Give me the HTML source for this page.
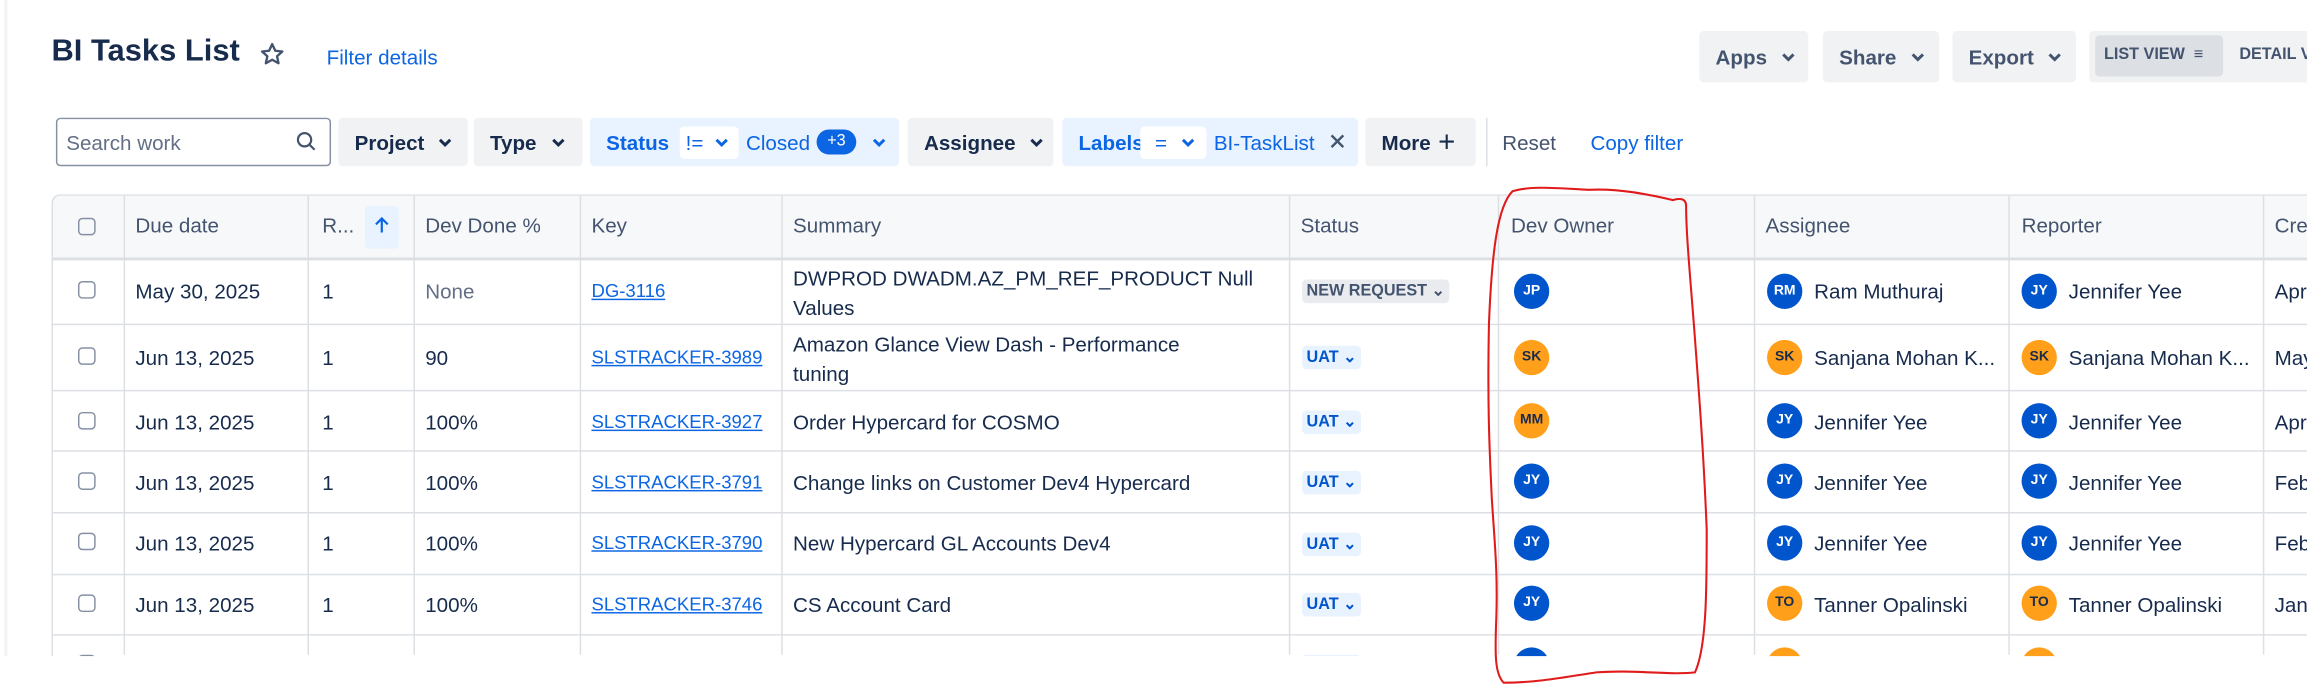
<!DOCTYPE html>
<html><head><meta charset="utf-8"><style>
html,body{margin:0;padding:0;background:#fff;}
body{width:2307px;height:688px;overflow:hidden;position:relative;}
#w{position:absolute;left:0;top:0;width:1568px;height:468px;transform:scale(1.4713);transform-origin:0 0;font-family:"Liberation Sans",sans-serif;color:#172b4d;font-size:14px;}
.a{position:absolute;}
.btn{position:absolute;background:#f1f2f4;border-radius:3px;font-weight:bold;color:#44546f;display:flex;align-items:center;box-sizing:border-box;padding-left:11px;}
.chev{display:inline-block;width:9px;height:6px;margin-left:10px;}
.lnk{color:#0c66e4;}
.hcell{position:absolute;top:132px;height:43px;line-height:43px;color:#44546f;font-size:14px;}
.vl{position:absolute;top:133px;height:312px;width:1px;background:#dcdfe4;}
.hl{position:absolute;left:35px;width:1533px;height:1px;background:#dcdfe4;}
.cb{position:absolute;left:53px;width:12px;height:12px;border:1.5px solid #8590a2;border-radius:3px;box-sizing:border-box;}
.t{position:absolute;white-space:nowrap;}
.key{color:#0c66e4;text-decoration:underline;font-size:12.6px;margin-top:1px;}
.av{position:absolute;width:24px;height:24px;border-radius:50%;color:#fff;font-size:9.5px;font-weight:bold;text-align:center;line-height:24px;}
.b{background:#0055cc;}
.o{background:#ff9f1a;color:#172b4d;}
.loz{position:absolute;left:885px;height:16px;line-height:16px;border-radius:3px;font-size:11px;font-weight:bold;padding:0 3px;}
.uat{background:#e9f2ff;color:#0055cc;}
.nr{background:#e9ebee;color:#44546f;}
</style></head><body><div id="w">
<div class="a" style="left:3px;top:0;width:2px;height:446px;background:#f1f2f4"></div>
<div class="t" style="left:35px;top:23px;font-size:21px;font-weight:bold;color:#172b4d">BI Tasks List</div>
<svg class="a" style="left:176px;top:28px" width="18" height="18" viewBox="0 0 18 18"><path d="M9 2l2.1 4.5 4.8.5-3.6 3.2 1 4.8L9 12.6 4.7 15l1-4.8L2.1 7l4.8-.5z" fill="none" stroke="#44546f" stroke-width="1.6" stroke-linejoin="round"/></svg>
<div class="t lnk" style="left:222px;top:31px;font-size:14px">Filter details</div>

<div class="btn" style="left:1155px;top:21px;width:74px;height:35px">Apps<svg class="chev" viewBox="0 0 9 6"><path d="M1 1l3.5 3.5L8 1" fill="none" stroke="#44546f" stroke-width="2"/></svg></div>
<div class="btn" style="left:1239px;top:21px;width:79px;height:35px">Share<svg class="chev" viewBox="0 0 9 6"><path d="M1 1l3.5 3.5L8 1" fill="none" stroke="#44546f" stroke-width="2"/></svg></div>
<div class="btn" style="left:1327px;top:21px;width:84px;height:35px">Export<svg class="chev" viewBox="0 0 9 6"><path d="M1 1l3.5 3.5L8 1" fill="none" stroke="#44546f" stroke-width="2"/></svg></div>
<div class="a" style="left:1420px;top:21px;width:160px;height:35px;background:#f1f2f4;border-radius:3px"></div>
<div class="a" style="left:1424px;top:24px;width:87px;height:28px;background:#dcdfe4;border-radius:3px"></div>
<div class="t" style="left:1430px;top:31px;font-size:11px;font-weight:bold;color:#44546f">LIST VIEW &nbsp;≡</div>
<div class="t" style="left:1522px;top:31px;font-size:11px;font-weight:bold;color:#44546f">DETAIL VIEW</div>

<div class="a" style="left:38px;top:80px;width:187px;height:33px;border:1px solid #8590a2;border-radius:3px;box-sizing:border-box"></div>
<div class="t" style="left:45px;top:89px;color:#626f86">Search work</div>
<svg class="a" style="left:201px;top:89px" width="14" height="14" viewBox="0 0 14 14"><circle cx="6" cy="6" r="4.5" fill="none" stroke="#44546f" stroke-width="1.5"/><path d="M9.3 9.3l3.5 3.5" stroke="#44546f" stroke-width="1.5"/></svg>
<div class="btn" style="left:230px;top:80px;width:88px;height:33px;color:#172b4d">Project<svg class="chev" viewBox="0 0 9 6"><path d="M1 1l3.5 3.5L8 1" fill="none" stroke="#172b4d" stroke-width="2"/></svg></div>
<div class="btn" style="left:322px;top:80px;width:74px;height:33px;color:#172b4d">Type<svg class="chev" viewBox="0 0 9 6"><path d="M1 1l3.5 3.5L8 1" fill="none" stroke="#172b4d" stroke-width="2"/></svg></div>
<div class="a" style="left:401px;top:80px;width:210px;height:33px;background:#e9f2ff;border-radius:3px"></div>
<div class="t" style="left:412px;top:89px;font-weight:bold;color:#0c66e4">Status</div>
<div class="a" style="left:462px;top:86px;width:40px;height:22px;background:#fff;border-radius:3px"></div>
<div class="t" style="left:466px;top:89px;color:#0c66e4">!=</div>
<svg class="a" style="left:486px;top:94px" width="9" height="6" viewBox="0 0 9 6"><path d="M1 1l3.5 3.5L8 1" fill="none" stroke="#0c66e4" stroke-width="2"/></svg>
<div class="t" style="left:507px;top:89px;color:#0c66e4">Closed</div>
<div class="a" style="left:555px;top:88px;width:27px;height:17px;border-radius:9px;background:#0c66e4;color:#fff;font-size:11px;text-align:center;line-height:17px">+3</div>
<svg class="a" style="left:593px;top:94px" width="9" height="6" viewBox="0 0 9 6"><path d="M1 1l3.5 3.5L8 1" fill="none" stroke="#0c66e4" stroke-width="2"/></svg>
<div class="btn" style="left:617px;top:80px;width:99px;height:33px;color:#172b4d">Assignee<svg class="chev" viewBox="0 0 9 6"><path d="M1 1l3.5 3.5L8 1" fill="none" stroke="#172b4d" stroke-width="2"/></svg></div>
<div class="a" style="left:722px;top:80px;width:201px;height:33px;background:#e9f2ff;border-radius:3px"></div>
<div class="t" style="left:733px;top:89px;font-weight:bold;color:#0c66e4">Labels</div>
<div class="a" style="left:775px;top:86px;width:45px;height:22px;background:#fff;border-radius:3px"></div>
<div class="t" style="left:785px;top:89px;color:#0c66e4">=</div>
<svg class="a" style="left:803px;top:94px" width="9" height="6" viewBox="0 0 9 6"><path d="M1 1l3.5 3.5L8 1" fill="none" stroke="#0c66e4" stroke-width="2"/></svg>
<div class="t" style="left:825px;top:89px;color:#0c66e4">BI-TaskList</div>
<svg class="a" style="left:904px;top:91px" width="10" height="10" viewBox="0 0 10 10"><path d="M1 1l8 8M9 1l-8 8" stroke="#44546f" stroke-width="1.6"/></svg>
<div class="btn" style="left:928px;top:80px;width:75px;height:33px;color:#172b4d">More <span style="font-size:20px;font-weight:normal;margin-left:5px;line-height:20px">+</span></div>
<div class="a" style="left:1010px;top:80px;width:1px;height:33px;background:#dcdfe4"></div>
<div class="t" style="left:1021px;top:89px;color:#44546f">Reset</div>
<div class="t lnk" style="left:1081px;top:89px">Copy filter</div>

<!-- table -->
<div class="a" style="left:35px;top:132px;width:1540px;height:43px;background:#f7f8f9;border-top:1px solid #dcdfe4;border-left:1px solid #dcdfe4;border-top-left-radius:6px;box-sizing:border-box"></div>
<div class="a" style="left:35px;top:140px;width:1px;height:306px;background:#dcdfe4"></div>
<div class="vl" style="left:84px"></div><div class="vl" style="left:209px"></div><div class="vl" style="left:281px"></div><div class="vl" style="left:394px"></div><div class="vl" style="left:531px"></div><div class="vl" style="left:876px"></div><div class="vl" style="left:1018px"></div><div class="vl" style="left:1192px"></div><div class="vl" style="left:1365px"></div><div class="vl" style="left:1538px"></div>
<div class="hl" style="top:175px;height:2px"></div><div class="hl" style="top:220px"></div><div class="hl" style="top:265px"></div><div class="hl" style="top:306px"></div><div class="hl" style="top:348px"></div><div class="hl" style="top:390px"></div><div class="hl" style="top:431px"></div>
<div class="cb" style="top:148px"></div>
<div class="hcell" style="left:92px">Due date</div>
<div class="hcell" style="left:219px">R...</div>
<div class="a" style="left:248px;top:140px;width:23px;height:29px;background:#e9f2ff;border-radius:3px"></div>
<svg class="a" style="left:254px;top:147px" width="11" height="12" viewBox="0 0 11 12"><path d="M5.5 11V1.5M1.5 5.5l4-4 4 4" fill="none" stroke="#0c66e4" stroke-width="1.5"/></svg>
<div class="hcell" style="left:289px">Dev Done %</div>
<div class="hcell" style="left:402px">Key</div>
<div class="hcell" style="left:539px">Summary</div>
<div class="hcell" style="left:884px">Status</div>
<div class="hcell" style="left:1027px">Dev Owner</div>
<div class="hcell" style="left:1200px">Assignee</div>
<div class="hcell" style="left:1374px">Reporter</div>
<div class="hcell" style="left:1546px">Created</div>

<!-- row1 -->
<div class="cb" style="top:191px"></div>
<div class="t" style="left:92px;top:190px">May 30, 2025</div>
<div class="t" style="left:219px;top:190px">1</div>
<div class="t" style="left:289px;top:190px;color:#626f86">None</div>
<div class="t key" style="left:402px;top:190px">DG-3116</div>
<div class="t" style="left:539px;top:179px;line-height:20px">DWPROD DWADM.AZ_PM_REF_PRODUCT Null<br>Values</div>
<div class="loz nr" style="top:190px">NEW REQUEST ⌄</div>
<div class="av b" style="left:1029px;top:186px">JP</div>
<div class="av b" style="left:1201px;top:186px">RM</div><div class="t" style="left:1233px;top:190px">Ram Muthuraj</div>
<div class="av b" style="left:1374px;top:186px">JY</div><div class="t" style="left:1406px;top:190px">Jennifer Yee</div>
<div class="t" style="left:1546px;top:190px">Apr</div>
<!-- row2 -->
<div class="cb" style="top:236px"></div>
<div class="t" style="left:92px;top:235px">Jun 13, 2025</div>
<div class="t" style="left:219px;top:235px">1</div>
<div class="t" style="left:289px;top:235px">90</div>
<div class="t key" style="left:402px;top:235px">SLSTRACKER-3989</div>
<div class="t" style="left:539px;top:224px;line-height:20px">Amazon Glance View Dash - Performance<br>tuning</div>
<div class="loz uat" style="top:235px">UAT ⌄</div>
<div class="av o" style="left:1029px;top:231px">SK</div>
<div class="av o" style="left:1201px;top:231px">SK</div><div class="t" style="left:1233px;top:235px">Sanjana Mohan K...</div>
<div class="av o" style="left:1374px;top:231px">SK</div><div class="t" style="left:1406px;top:235px">Sanjana Mohan K...</div>
<div class="t" style="left:1546px;top:235px">May</div>
<!-- row3 -->
<div class="cb" style="top:280px"></div>
<div class="t" style="left:92px;top:279px">Jun 13, 2025</div>
<div class="t" style="left:219px;top:279px">1</div>
<div class="t" style="left:289px;top:279px">100%</div>
<div class="t key" style="left:402px;top:279px">SLSTRACKER-3927</div>
<div class="t" style="left:539px;top:279px">Order Hypercard for COSMO</div>
<div class="loz uat" style="top:279px">UAT ⌄</div>
<div class="av o" style="left:1029px;top:274px">MM</div>
<div class="av b" style="left:1201px;top:274px">JY</div><div class="t" style="left:1233px;top:279px">Jennifer Yee</div>
<div class="av b" style="left:1374px;top:274px">JY</div><div class="t" style="left:1406px;top:279px">Jennifer Yee</div>
<div class="t" style="left:1546px;top:279px">Apr</div>
<!-- row4 -->
<div class="cb" style="top:321px"></div>
<div class="t" style="left:92px;top:320px">Jun 13, 2025</div>
<div class="t" style="left:219px;top:320px">1</div>
<div class="t" style="left:289px;top:320px">100%</div>
<div class="t key" style="left:402px;top:320px">SLSTRACKER-3791</div>
<div class="t" style="left:539px;top:320px">Change links on Customer Dev4 Hypercard</div>
<div class="loz uat" style="top:320px">UAT ⌄</div>
<div class="av b" style="left:1029px;top:315px">JY</div>
<div class="av b" style="left:1201px;top:315px">JY</div><div class="t" style="left:1233px;top:320px">Jennifer Yee</div>
<div class="av b" style="left:1374px;top:315px">JY</div><div class="t" style="left:1406px;top:320px">Jennifer Yee</div>
<div class="t" style="left:1546px;top:320px">Feb</div>
<!-- row5 -->
<div class="cb" style="top:362px"></div>
<div class="t" style="left:92px;top:361px">Jun 13, 2025</div>
<div class="t" style="left:219px;top:361px">1</div>
<div class="t" style="left:289px;top:361px">100%</div>
<div class="t key" style="left:402px;top:361px">SLSTRACKER-3790</div>
<div class="t" style="left:539px;top:361px">New Hypercard GL Accounts Dev4</div>
<div class="loz uat" style="top:362px">UAT ⌄</div>
<div class="av b" style="left:1029px;top:357px">JY</div>
<div class="av b" style="left:1201px;top:357px">JY</div><div class="t" style="left:1233px;top:361px">Jennifer Yee</div>
<div class="av b" style="left:1374px;top:357px">JY</div><div class="t" style="left:1406px;top:361px">Jennifer Yee</div>
<div class="t" style="left:1546px;top:361px">Feb</div>
<!-- row6 -->
<div class="cb" style="top:404px"></div>
<div class="t" style="left:92px;top:403px">Jun 13, 2025</div>
<div class="t" style="left:219px;top:403px">1</div>
<div class="t" style="left:289px;top:403px">100%</div>
<div class="t key" style="left:402px;top:403px">SLSTRACKER-3746</div>
<div class="t" style="left:539px;top:403px">CS Account Card</div>
<div class="loz uat" style="top:403px">UAT ⌄</div>
<div class="av b" style="left:1029px;top:398px">JY</div>
<div class="av o" style="left:1201px;top:398px">TO</div><div class="t" style="left:1233px;top:403px">Tanner Opalinski</div>
<div class="av o" style="left:1374px;top:398px">TO</div><div class="t" style="left:1406px;top:403px">Tanner Opalinski</div>
<div class="t" style="left:1546px;top:403px">Jan</div>
<!-- row7 partial -->
<div class="a" style="left:35px;top:432px;width:1540px;height:14px;overflow:hidden">
<div class="cb" style="left:18px;top:13px"></div>
<div class="loz uat" style="left:850px;top:13px;width:34px"></div>
<div class="av b" style="left:994px;top:8px"></div>
<div class="av o" style="left:1166px;top:8px"></div>
<div class="av o" style="left:1339px;top:8px"></div>
</div>
<div class="a" style="left:0;top:446px;width:1568px;height:22px;background:#fff"></div>

<svg class="a" style="left:0;top:0" width="1568" height="468" viewBox="0 0 1568 468"><path d="M1137 136 C1120 132 1100 128 1080 129 C1060 128 1040 126 1028 130 C1018 140 1014 170 1012 220 C1011 270 1012 300 1014 340 C1016 370 1018 390 1017 420 C1016 445 1016 458 1022 464 C1045 464 1065 460 1085 457 C1110 455 1135 459 1152 457 C1160 440 1160 400 1160 360 C1158 310 1155 270 1152 230 C1149 190 1146 160 1146 140 C1146 134 1140 135 1137 136 Z" fill="none" stroke="#e01b1b" stroke-width="1.4"/></svg>
</div></body></html>
